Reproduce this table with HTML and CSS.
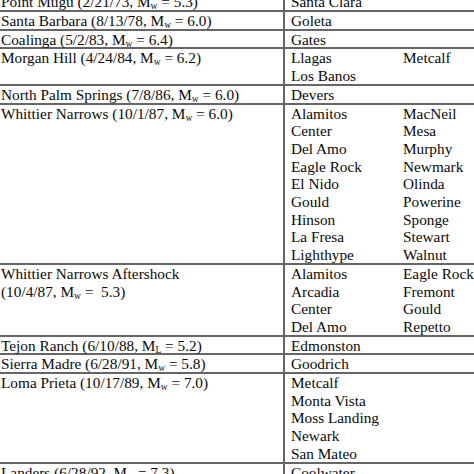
FILE: index.html
```html
<!DOCTYPE html>
<html>
<head>
<meta charset="utf-8">
<link rel="stylesheet" href="styles.css">
</head>
<body>
<div class="table">
  <div class="row">
    <div class="quake">Point Mugu (2/21/73, M<sub>w</sub> = 5.3)</div>
    <div class="stations"><div class="names"><span>Santa Clara</span></div></div>
  </div>
  <div class="row">
    <div class="quake">Santa Barbara (8/13/78, M<sub>w</sub> = 6.0)</div>
    <div class="stations"><div class="names"><span>Goleta</span></div></div>
  </div>
  <div class="row">
    <div class="quake">Coalinga (5/2/83, M<sub>w</sub> = 6.4)</div>
    <div class="stations"><div class="names"><span>Gates</span></div></div>
  </div>
  <div class="row">
    <div class="quake">Morgan Hill (4/24/84, M<sub>w</sub> = 6.2)</div>
    <div class="stations"><div class="names"><span>Llagas</span><span>Metcalf</span><span>Los Banos</span></div></div>
  </div>
  <div class="row">
    <div class="quake">North Palm Springs (7/8/86, M<sub>w</sub> = 6.0)</div>
    <div class="stations"><div class="names"><span>Devers</span></div></div>
  </div>
  <div class="row">
    <div class="quake">Whittier Narrows (10/1/87, M<sub>w</sub> = 6.0)</div>
    <div class="stations"><div class="names">
      <span>Alamitos</span><span>MacNeil</span>
      <span>Center</span><span>Mesa</span>
      <span>Del Amo</span><span>Murphy</span>
      <span>Eagle Rock</span><span>Newmark</span>
      <span>El Nido</span><span>Olinda</span>
      <span>Gould</span><span>Powerine</span>
      <span>Hinson</span><span>Sponge</span>
      <span>La Fresa</span><span>Stewart</span>
      <span>Lighthype</span><span>Walnut</span>
    </div></div>
  </div>
  <div class="row">
    <div class="quake">Whittier Narrows Aftershock<br>(10/4/87, M<sub>w</sub> =&nbsp; 5.3)</div>
    <div class="stations"><div class="names">
      <span>Alamitos</span><span>Eagle Rock</span>
      <span>Arcadia</span><span>Fremont</span>
      <span>Center</span><span>Gould</span>
      <span>Del Amo</span><span>Repetto</span>
    </div></div>
  </div>
  <div class="row">
    <div class="quake">Tejon Ranch (6/10/88, M<sub>L</sub> = 5.2)</div>
    <div class="stations"><div class="names"><span>Edmonston</span></div></div>
  </div>
  <div class="row">
    <div class="quake">Sierra Madre (6/28/91, M<sub>w</sub> = 5.8)</div>
    <div class="stations"><div class="names"><span>Goodrich</span></div></div>
  </div>
  <div class="row">
    <div class="quake">Loma Prieta (10/17/89, M<sub>w</sub> = 7.0)</div>
    <div class="stations"><div class="names single">
      <span>Metcalf</span>
      <span>Monta Vista</span>
      <span>Moss Landing</span>
      <span>Newark</span>
      <span>San Mateo</span>
    </div></div>
  </div>
  <div class="row">
    <div class="quake">Landers (6/28/92, M<sub>w</sub> = 7.3)</div>
    <div class="stations"><div class="names"><span>Coolwater</span></div></div>
  </div>
</div>
</body>
</html>
```

FILE: styles.css
```css
html, body {
  margin: 0;
  padding: 0;
  background: #ffffff;
  overflow: hidden;
}

body {
  font-family: "Liberation Serif", "Times New Roman", serif;
  font-size: 15.3px;
  color: #0a0a0a;
}

.table {
  width: 474px;
  margin-top: -6.7px;
}

.row {
  display: grid;
  grid-template-columns: 283px 1fr;
  border-bottom: 2px solid #666666;
}

.quake,
.stations {
  line-height: 17.7px;
  margin-bottom: -1px;
  white-space: nowrap;
}

.quake {
  padding-left: 1px;
}

.stations {
  border-left: 2px solid #666666;
  padding-left: 6px;
}

.names {
  display: grid;
  grid-template-columns: 112px auto;
}

.names.single {
  grid-template-columns: auto;
}

sub {
  font-size: 9.5px;
  vertical-align: -2px;
  line-height: 0;
}
```
